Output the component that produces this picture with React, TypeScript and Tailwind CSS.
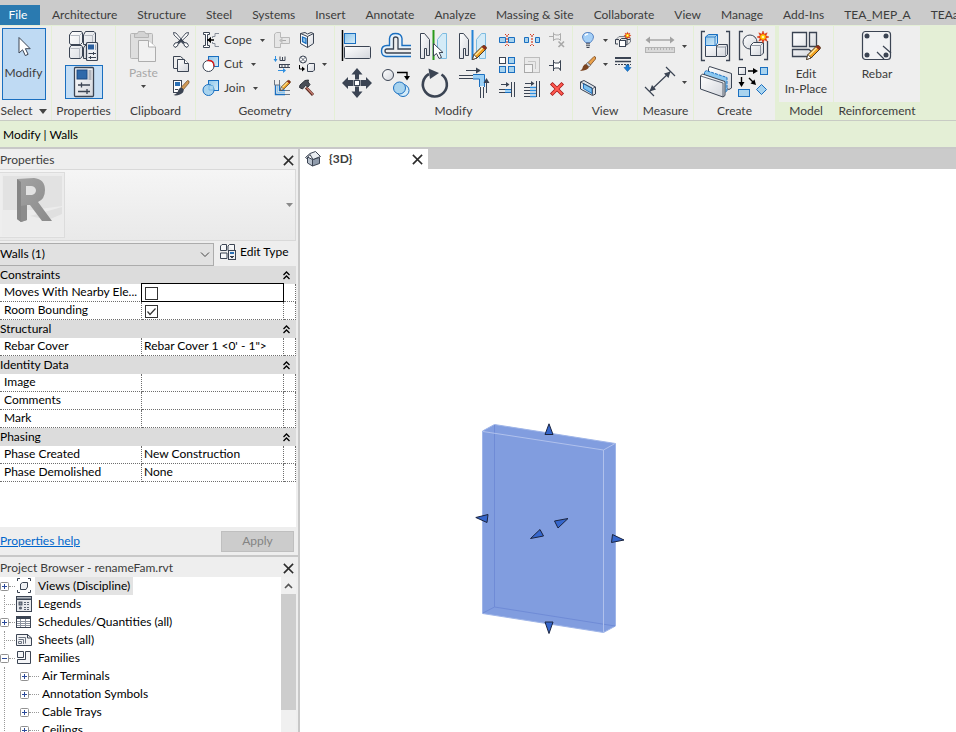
import React, { useState } from 'react';

interface IconProps {
  w?: number;
  h?: number;
  children: React.ReactNode;
}

const INK = '#3b4453';
const BLUE = '#1a6fc0';
const SKY = '#a8d3ee';

const Icon: React.FC<IconProps> = ({ w = 18, h = 18, children }) => (
  <svg width={w} height={h} viewBox={`0 0 ${w} ${h}`} fill="none" className="shrink-0" aria-hidden="true">
    {children}
  </svg>
);

const Gradients = () => (
  <svg width="0" height="0" className="absolute" aria-hidden="true">
    <defs>
      <linearGradient id="face" x1="0" y1="0" x2="1" y2="1">
        <stop offset="0" stopColor="#ffffff" />
        <stop offset="1" stopColor="#d3d6dc" />
      </linearGradient>
      <linearGradient id="sky" x1="0" y1="0" x2="1" y2="1">
        <stop offset="0" stopColor="#8fc6ea" />
        <stop offset="1" stopColor="#d6ecf8" />
      </linearGradient>
      <linearGradient id="letter" x1="0" y1="0" x2="1" y2="1">
        <stop offset="0" stopColor="#a3a3a3" />
        <stop offset="1" stopColor="#8a8a8a" />
      </linearGradient>
    </defs>
  </svg>
);

/* Shared bits */
const Caret = () => (
  <svg width="5" height="3" viewBox="0 0 5 3" className="shrink-0" aria-hidden="true">
    <path d="M0 0H5L2.5 3Z" fill="#444" />
  </svg>
);

const Pencil = ({ x = 0, y = 0 }: { x?: number; y?: number }) => (
  <g transform={`translate(${x} ${y})`}>
    <path d="M0.5 14.5L2 9.5L10.5 1Q12 0 13.5 1.2Q15 2.6 14 4L5 13Z" fill="#f0a020" stroke="#4a3a28" strokeWidth="1" />
    <path d="M3 10.5L11 2.5" stroke="#ffe9a0" strokeWidth="1.4" />
    <path d="M10.5 1Q12 0 13.5 1.2Q15 2.6 14 4L13 5L9.6 2Z" fill="#8b2f1c" />
    <path d="M0.5 14.5L2 9.5L5 13Z" fill="#fff" stroke="#4a3a28" strokeWidth=".8" />
  </g>
);

const Spark = ({ x, y, r = 5 }: { x: number; y: number; r?: number }) => (
  <g transform={`translate(${x} ${y}) scale(${r / 5})`}>
    <path d="M0-6L1.3-2.8L4.2-4.2L2.8-1.3L6 0L2.8 1.3L4.2 4.2L1.3 2.8L0 6L-1.3 2.8L-4.2 4.2L-2.8 1.3L-6 0L-2.8-1.3L-4.2-4.2L-1.3-2.8Z" fill="#e63312" stroke="#d4380f" strokeWidth=".5" />
    <circle r="2.8" fill="#ffc400" />
    <circle r="1.3" fill="#fff8b0" />
  </g>
);

/* Select / properties */
const CursorIcon = () => (
  <Icon w={16} h={24}>
    <path d="M3 2.5V18L6.6 14.8L9.3 20.6L12.1 19.3L9.4 13.7H14.2Z" fill="#fff" stroke={INK} />
  </Icon>
);

const TypePropsIcon = () => (
  <Icon w={32} h={32}>
    <path d="M1.5 5L4 1.500H13.500L14.500 3V12.500L12.500 14.500H2.500L1.500 13ZM15.500 5L17.500 1.500H26L27.500 3V13L26 14.500H15.500ZM1.500 18L3 15.500H13.500L14.500 17V26L12.500 28.500H2.500L1.500 27ZM15.500 28.500V18L17 15.500H19V28.500Z" fill="url(#face)" stroke={INK} />
    <path d="M2.500 5.500H11.500V14M11.500 5.500L14 3M16.500 5.500H24.500V12M24.500 5.500L27 3M2.500 18.500H11.500V28M11.500 18.500L14 16.500" stroke="#b4b9c1" />
    <rect x="18.500" y="12.500" width="11" height="18" rx="1" fill="#eef0f4" stroke={INK} strokeWidth="1.200" />
    <rect x="20" y="14.500" width="6" height="5" fill="#2a5f9e" />
    <path d="M27.500 14.500V20" stroke="#a5abb5" />
    <path d="M20.500 23.500H28M20.500 27.500H28M25.500 22V25M22.500 26V29" stroke={INK} />
  </Icon>
);

const PaletteIcon = () => (
  <Icon w={24} h={32}>
    <rect x="2.500" y="1.500" width="19" height="29" rx="1" fill="url(#face)" stroke={INK} strokeWidth="1.300" />
    <rect x="5" y="4" width="10" height="9" fill="#2f69aa" stroke="#1c4a82" />
    <path d="M18 4V14" stroke="#b0b5be" strokeWidth="3" />
    <path d="M6 19H18M6 25.500H18M9.500 16.500V21.500M15 23V28" stroke={INK} strokeWidth="1.300" />
  </Icon>
);

/* Clipboard */
const PasteIcon = () => (
  <Icon w={28} h={33}>
    <rect x="1.500" y="3.500" width="22" height="25" rx="1" fill="#dedede" stroke="#b5b5b5" />
    <path d="M5.500 7.500V4L8.500 3.500L9.500 1.500H15.500L16.500 3.500L19.500 4V7.500Z" fill="#d3d3d3" stroke="#b5b5b5" />
    <path d="M9.500 10.500H19.500L26.500 17V31.500H9.500Z" fill="#f1f1f1" stroke="#adadad" />
    <path d="M19.500 10.500V17H26.500" fill="#fff" stroke="#adadad" />
  </Icon>
);

const ScissorsIcon = () => (
  <Icon>
    <path d="M1.500 1.500L4 2L12.500 12L11 12.500L2 4ZM16.500 1.500L14 2L5.500 12L7 12.500L16 4Z" fill="#fff" stroke={INK} strokeWidth=".9" />
    <path d="M6 12L9 9L12 12" stroke={INK} strokeWidth="2.200" />
    <path d="M6 11.500L3 12L1.500 14.500L3 16.500L5.500 15L6.500 12ZM12 11.500L15 12L16.500 14.500L15 16.500L12.500 15L11.500 12Z" fill="#fff" stroke={INK} />
  </Icon>
);

const CopyIcon = () => (
  <Icon>
    <path d="M1.500 13V1.500H8.500L11.500 4M1.500 13.500H5" stroke={INK} />
    <path d="M5.500 4.500H12.500L16.500 8.500V16.500H5.500Z" fill="url(#face)" stroke={INK} />
    <path d="M12.500 4.500V8.500H16.500" fill="#fff" stroke={INK} />
  </Icon>
);

const MatchIcon = () => (
  <Icon>
    <rect x="1.500" y="1.500" width="8" height="12" fill="#fff" stroke={INK} />
    <rect x="3" y="3" width="5" height="4" fill="#2a6fb5" />
    <path d="M3 10.500H6" stroke={INK} />
    <path d="M17 2L15.500 1.500L9 8.500L11.500 10.500L17 4Z" fill="#d29a55" stroke="#6b4a2a" strokeWidth=".7" />
    <path d="M9.500 8.500L11.700 10.600Q12 14 8 15.500Q4 17 1.500 16Q5.500 14.500 6 12Q7 8.500 9.500 8.500Z" fill={INK} />
  </Icon>
);

/* Geometry */
const CopeIcon = () => (
  <Icon>
    <path d="M1.500 1.500H7.500V3.500H5.500V14.500H7.500V16.500H1.500V14.500H3.500V3.500H1.500Z" fill="#fff" stroke={INK} />
    <path d="M5 9H12" stroke="#000" strokeWidth="1.500" />
    <path d="M5.500 9L9 5.800V12.200Z" fill="#000" />
    <path d="M17 2.500H13V5.500H10.500M10.500 12.500H13V15.500H17" stroke="#868d99" />
    <path d="M10.500 5.500V7M10.500 11V12.500" stroke="#868d99" />
  </Icon>
);

const CutIcon = () => (
  <Icon>
    <rect x="6.500" y="1.500" width="10" height="10" fill="url(#sky)" stroke={BLUE} />
    <circle cx="6.500" cy="11" r="5.500" fill="#fff" stroke={INK} />
    <path d="M5.500 5.500Q12.500 5 12 11.500" stroke="#e01818" strokeWidth="1.400" />
  </Icon>
);

const JoinIcon = () => (
  <Icon>
    <rect x="6.500" y="1.500" width="10" height="10" fill="url(#sky)" stroke={BLUE} />
    <circle cx="6.500" cy="11" r="5.500" fill={SKY} stroke={BLUE} />
    <path d="M7 6.500H11Q11.500 7.500 11.500 11H7Z" fill={SKY} stroke="#64aede" strokeWidth=".7" />
  </Icon>
);

const CopeRemoveIcon = () => (
  <Icon>
    <path d="M1.500 3L3.500 1.500H7.500V6.500H16.500V12.500H7.500V16.500H1.500Z" fill="#e6e6e6" stroke="#b9b9b9" />
    <path d="M13 9.500H8" stroke="#a8a8a8" />
    <path d="M6 9.500L9.500 6.500V12.500Z" fill="#bdbdbd" />
  </Icon>
);

const BeamJoinIcon = () => (
  <Icon>
    <path d="M7 1.500V5.500H12V1.500M9.500 2V5" stroke={INK} />
    <path d="M6.500 9V13M7 9.500H17M7 12.500H17" stroke={INK} />
    <path d="M8 11H17" stroke={INK} strokeDasharray="2 1" />
    <path d="M2.500 1V6M5 15.500H11" stroke="#2e8fe0" />
    <path d="M.5 4L2.500 7L4.500 4ZM10 13L13 15.500L10 18Z" fill="#2e8fe0" />
  </Icon>
);

const WallJoinIcon = () => (
  <Icon>
    <path d="M2.500 6V15.500H12M6.500 6V11.500H12" stroke={BLUE} strokeWidth="1.400" />
    <path d="M4.500 6V13.500H12" stroke="#8cc8f0" />
    <path d="M1.500 1V6H6.500V1M12 11.500H17M12 15.500H17" stroke="#6d7582" />
    <g transform="translate(7 1) scale(.72)">
      <Pencil />
    </g>
  </Icon>
);

const SplitFaceIcon = () => (
  <Icon>
    <path d="M2.500 2.500L9.500 5.500V16.500L2.500 12.500Z" fill="#fff" stroke={INK} />
    <path d="M9.500 5.500L15.500 2.500V12.500L9.500 16.500Z" fill="url(#face)" stroke={INK} />
    <path d="M2.500 2.500L7 1.500L9.500 3L13 1.500L15.500 2.500" stroke={INK} />
    <path d="M4.500 6L8 7.500V12.500L4.500 10.500Z" fill="#8fc6ea" stroke={BLUE} strokeWidth="1.300" />
  </Icon>
);

const PaintIcon = () => (
  <Icon>
    <circle cx="5" cy="4.500" r="3.500" fill="#fff" stroke={INK} />
    <path d="M2.500 2L7.500 7M7.500 2L2.500 7" stroke={INK} strokeWidth=".8" />
    <path d="M1.500 10V14H4" stroke="#000" />
    <path d="M4 11.500L7 14L4 16.500Z" fill="#000" />
    <path d="M9.500 10L11 8.500H16.500V15L15 16.500H9.500Z" fill="url(#face)" stroke={INK} />
  </Icon>
);

const HammerIcon = () => (
  <Icon>
    <path d="M8 8.500L15 16" stroke="#5b2b20" strokeWidth="3" />
    <path d="M8.500 8.500L15 15.500" stroke="#c97f74" strokeWidth="1.200" />
    <path d="M1.500 8.500L2 6L7 1.500L10.500 1L10 3L12 5.500L10 8L7.500 6.500L4.500 10Z" fill="#4a4f58" stroke="#2f333a" />
  </Icon>
);

/* Modify, large */
const AlignIcon = () => (
  <Icon w={32} h={34}>
    <path d="M1.500 1V32" stroke="#000" strokeWidth="1.500" />
    <rect x="3.500" y="4.500" width="11" height="10" fill="url(#sky)" stroke={BLUE} />
    <rect x="3.500" y="17.500" width="26" height="12" rx="1" fill="url(#face)" stroke={INK} />
  </Icon>
);

const OffsetIcon = () => (
  <Icon w={32} h={34}>
    <path d="M31 27.500H6Q1.500 27 1.500 22Q1.500 16.500 7 16.500H9.500V9.500Q10 4.500 15.500 4.500Q21.500 4.500 22 9.500V16.500H31" fill="#e6f1fa" stroke={BLUE} strokeWidth="1.400" />
    <path d="M31 24H7Q5 24 5 22Q5 20 7 20H13.500V10Q13.500 8 15.500 8Q18 8 18 10V20H31" fill="#eee" stroke={INK} strokeWidth="1.300" />
  </Icon>
);

const MirrorShapes = () => (
  <>
    <path d="M1.500 4.500H5.500L10.500 10.500V26.500H7.500V19.500H5.500V29.500H1.500Z" fill="url(#face)" stroke={INK} />
    <path d="M27.500 4.500H23.500L18.500 10.500V26.500H21.500V29.500H27.500Z" fill="#d4ebf7" stroke="#7dbbe0" />
  </>
);

const MirrorPickIcon = () => (
  <Icon w={32} h={34}>
    <MirrorShapes />
    <path d="M14.500 1V31" stroke="#2a9a1a" strokeWidth="2" />
    <path d="M14.500 14.500V27L17.500 24.500L20 29.500L22.500 28.500L20.200 23.500H24Z" fill="#fff" stroke={INK} />
  </Icon>
);

const MirrorDrawIcon = () => (
  <Icon w={32} h={34}>
    <MirrorShapes />
    <path d="M14.500 1V31" stroke="#2583d6" strokeWidth="2" />
    <Pencil x={14} y={16} />
  </Icon>
);

const MoveIcon = () => (
  <Icon w={32} h={34}>
    <path d="M16 2L21.500 8.500H18V14H25V11L31 17L25 23V20H18V25.500H21.500L16 32L10.500 25.500H14V20H7V23L1 17L7 11V14H14V8.500H10.500Z" fill={INK} />
    <rect x="12.500" y="13.500" width="7" height="7" fill="#eee" />
    <rect x="13.500" y="14.500" width="5" height="5" fill="#fff" stroke={INK} />
  </Icon>
);

const CopyShapeIcon = () => (
  <Icon w={32} h={34}>
    <circle cx="8" cy="9" r="5.500" fill="url(#face)" stroke={INK} />
    <path d="M17 6.500H27V11" stroke="#000" strokeWidth="1.400" />
    <path d="M24 10H30L27 14.500Z" fill="#000" />
    <circle cx="23" cy="24.500" r="6" fill="#d6ecf8" stroke={BLUE} />
    <circle cx="19.500" cy="22" r="6" fill={SKY} stroke={BLUE} />
  </Icon>
);

const RotateIcon = () => (
  <Icon w={32} h={34}>
    <path d="M22.500 8.500A12 12 0 1 1 10 8" stroke={INK} strokeWidth="2.600" />
    <path d="M9.500 2.500L20 7L11 13Z" fill={INK} />
  </Icon>
);

const TrimIcon = () => (
  <Icon w={32} h={34}>
    <path d="M1 9.500H15M1 12.500H15" stroke={INK} />
    <path d="M15 11H24V20" stroke="#9bd0f5" strokeWidth="4" />
    <path d="M15 8.500H26.500V21M15 13H21.500V21" stroke={BLUE} />
    <path d="M22.500 21V32M25.500 21V32" stroke={INK} />
    <path d="M8 4.500H20M28.500 27V15" stroke={INK} />
    <path d="M18 1.500L23 4.500L18 7.500ZM25.500 17L28.500 12L31.500 17Z" fill={INK} />
  </Icon>
);

/* Modify, small */
const SplitIcon = () => (
  <Icon>
    <path d="M1.500 6.500H7.500V11.500H1.500ZM10.500 6.500H16.500V11.500H10.500Z" fill={SKY} stroke={BLUE} />
    <path d="M9 4V14" stroke="#d03a20" strokeWidth="1.200" strokeDasharray="2 1" />
    <path d="M7 3.500H8M10 3.500H11M7 14.500H8M10 14.500H11" stroke="#d03a20" />
  </Icon>
);

const SplitGapIcon = () => (
  <Icon>
    <path d="M1.500 6.500H5.500V11.500H1.500ZM12.500 6.500H16.500V11.500H12.500Z" fill={SKY} stroke={BLUE} />
    <path d="M9 4V14" stroke="#d03a20" strokeWidth="1.200" strokeDasharray="2 1" />
    <path d="M7 3.500H8M10 3.500H11M7 14.500H8M10 14.500H11" stroke="#d03a20" />
  </Icon>
);

const UnpinIcon = () => (
  <Icon>
    <path d="M1 5.500H5M5.500 1.500V10M5.500 3L8 4H11L12.500 2.500V9.500L11 8H8L5.500 9" stroke="#adadad" />
    <path d="M10.500 10.500L16 16M16 10.500L10.500 16" stroke="#a8a8a8" strokeWidth="1.600" />
  </Icon>
);

const ArrayIcon = () => (
  <Icon>
    <rect x="1.500" y="1.500" width="6" height="6" fill="#fff" stroke={INK} />
    <rect x="10.500" y="1.500" width="6" height="6" fill={SKY} stroke={BLUE} />
    <rect x="1.500" y="10.500" width="6" height="6" fill={SKY} stroke={BLUE} />
    <rect x="10.500" y="10.500" width="6" height="6" fill={SKY} stroke={BLUE} />
  </Icon>
);

const ScaleIcon = () => (
  <Icon>
    <rect x="1.500" y="1.500" width="15" height="15" fill="#e9e9e9" stroke="#bdbdbd" />
    <rect x="1.500" y="8.500" width="8" height="8" fill="#f3f3f3" stroke="#a8a8a8" />
    <path d="M5 5.500H12.500V13" stroke="#c6c6c6" />
  </Icon>
);

const PinIcon = () => (
  <Icon>
    <path d="M1 9.500H5" stroke={INK} />
    <path d="M5.500 4V15M5.500 6L7 7H11L12.500 4.500V14.500L11 12H7L5.500 13" fill="#fff" stroke={INK} />
  </Icon>
);

const TrimOneIcon = () => (
  <Icon>
    <path d="M1 9.500H7M1 12.500H7M13.500 2V17M16.500 2V17" stroke={INK} />
    <path d="M7 11H13" stroke="#9bd0f5" strokeWidth="3" />
    <path d="M7 9.500H13M7 12.500H13" stroke={BLUE} />
    <path d="M3 4.500H9" stroke={INK} />
    <path d="M8 2L11.500 4.500L8 7Z" fill={INK} />
  </Icon>
);

const TrimManyIcon = () => (
  <Icon>
    <path d="M1 7.500H7M1 10.500H7M1 13.500H7M1 16.500H7M13.500 1V17M16.500 1V17" stroke={INK} />
    <path d="M7 7.500H13M7 10.500H13M7 13.500H13M7 16.500H13" stroke="#2e8fe0" strokeWidth="1.400" />
    <path d="M2 3.500H9" stroke={INK} />
    <path d="M8 1L11.500 3.500L8 6Z" fill={INK} />
  </Icon>
);

const DeleteIcon = () => (
  <Icon>
    <path d="M4.500 4.500L13.500 13.500M13.500 4.500L4.500 13.500" stroke="#a81818" strokeWidth="3.600" strokeLinecap="square" />
    <path d="M4.500 4.500L13.500 13.500M13.500 4.500L4.500 13.500" stroke="#ff5a50" strokeWidth="2" strokeLinecap="square" />
  </Icon>
);

/* View */
const BulbIcon = () => (
  <Icon>
    <path d="M6.500 11.500Q3.500 8.500 3.500 6Q4 1.500 9 1.500Q14 1.500 14.500 6Q14.500 8.500 11.500 11.500Z" fill="#a5d0f7" stroke="#5a86c4" />
    <path d="M6 4.500Q7 3 9 3" stroke="#fff" strokeWidth="1.500" />
    <path d="M7 12.500H11M7 14.500H11" stroke="#6f7580" strokeWidth="1.400" />
    <path d="M7.500 16.500H10.500" stroke={INK} />
  </Icon>
);

const BrushIcon = () => (
  <Icon>
    <path d="M16.500 2L15 1.500L9 7.500L11.500 10L16.500 4Z" fill="#e9a14c" stroke="#7a4a22" strokeWidth=".8" />
    <path d="M8.500 7.500L11.700 10.300L10 12L7 9Z" fill="#c9cdd3" stroke="#555" strokeWidth=".6" />
    <path d="M7 9L10 12Q9 15.500 1 16Q4 13.500 4 11.500Q5 9 7 9Z" fill="#7b4420" />
  </Icon>
);

const SelectionBoxIcon = () => (
  <Icon>
    <path d="M1.500 3L5 1.500L16.500 8V15L13.500 16.500L1.500 10Z" fill="#dfe3e8" stroke={INK} />
    <path d="M4.500 4.500L13 9V14.500L4.500 9.500Z" fill="#7cc0ee" stroke={BLUE} />
    <path d="M1.500 3L13.500 9.500V16M13.500 9.500L16.500 8" stroke={INK} strokeWidth=".8" />
  </Icon>
);

const HideBoxIcon = () => (
  <Icon>
    <path d="M1.500 9L5 5.500H11L16.500 7V11L13 14" fill="#e2e2e2" stroke="#7b808a" />
    <path d="M1.500 8.500V13H4M1.500 8.500H5M13 8.500H16" stroke={INK} />
    <rect x="5.500" y="9.500" width="6" height="6" fill="#fff" stroke={INK} />
    <path d="M5.500 9.500L7.500 7.500H13V13L11.500 15" stroke={INK} />
    <Spark x={13.500} y={4.500} r={3} />
  </Icon>
);

const LineworkIcon = () => (
  <Icon>
    <path d="M1 3H17" stroke={INK} strokeWidth="2" />
    <path d="M1 6.500H17" stroke={INK} strokeWidth="1.500" />
    <path d="M1 9.500H17" stroke={INK} strokeDasharray="2 1" />
    <path d="M12 10H15V12.500H17L13.500 16.500L10 12.500H12Z" fill="#1c7fd8" stroke="#0f5aa5" strokeWidth=".6" />
  </Icon>
);

/* Measure */
const RulerIcon = () => (
  <Icon w={32} h={34}>
    <path d="M5 11H27" stroke="#a2a2a2" strokeWidth="1.400" />
    <path d="M1.500 11L6 7.500V14.500ZM30.500 11L26 7.500V14.500Z" fill="#a2a2a2" />
    <rect x="1.500" y="18.500" width="29" height="5" fill="#d9d9d9" stroke="#b3b3b3" />
    <path d="M4.500 19V21M7.500 19V21M10.500 19V21M13.500 19V21M16.500 19V21M19.500 19V21M22.500 19V21M25.500 19V21M28 19V21" stroke="#b3b3b3" />
  </Icon>
);

const DimensionIcon = () => (
  <Icon w={32} h={34}>
    <path d="M1 22L10 31M22 2L31 11M6 26L26 7" stroke={INK} strokeWidth="1.200" />
    <path d="M5.500 26.500L8 20L12 24.500ZM26.500 6.500L20 8.500L24.500 13Z" fill={INK} />
  </Icon>
);

/* Create */
const GroupIcon = () => (
  <Icon w={34} h={34}>
    <path d="M6 2.500H2.500V31.500H6M27 2.500H30.500V31.500H27" stroke={INK} strokeWidth="1.300" />
    <path d="M6.500 16.500H17.500V27.500H6.500ZM17.500 18L19.500 15.500H28.500V25.500L26.500 27.500H17.500Z" fill="url(#face)" stroke={INK} />
    <path d="M17.500 18H26.500V27M26.500 18L28.500 15.500" stroke="#8e95a0" />
    <path d="M6.500 8L9.500 5.500H18.500V14L16.500 16.500H6.500Z" fill="url(#sky)" stroke={BLUE} />
    <path d="M6.500 8H16V16M16 8L18.500 5.500" stroke={BLUE} strokeWidth=".8" />
  </Icon>
);

const AssemblyIcon = () => (
  <Icon w={34} h={34}>
    <path d="M6 2.500H2.500V30.500H6M27 30.500H30.500V12" stroke={INK} strokeWidth="1.300" />
    <circle cx="13" cy="13" r="7" fill="url(#face)" stroke={INK} />
    <path d="M13.500 16.500L16.500 13.500H26.500V24L24 26.500H13.500Z" fill="url(#face)" stroke={INK} />
    <path d="M13.500 16.500H23.500V26M23.500 16.500L26.500 13.500" stroke="#8e95a0" />
    <Spark x={26} y={8} r={5} />
  </Icon>
);

const PartsIcon = () => (
  <Icon w={34} h={34}>
    <path d="M9.500 3.500L10.500 1.500L32.500 8.500V23L30 24.500L9.500 16.500Z" fill="url(#face)" stroke={INK} />
    <path d="M5.500 7.500L7 5.500L28 12.500V26L26 27.500L5.500 20.500Z" fill="#8cc8f0" stroke={BLUE} strokeDasharray="3 1" />
    <path d="M1.500 11L3.500 9L26 16.500V30.500L24 32L1.500 24Z" fill="url(#face)" stroke={INK} />
    <path d="M1.500 11L24 18V32" stroke={INK} strokeWidth=".8" />
  </Icon>
);

const SimilarIcon = () => (
  <Icon w={34} h={34}>
    <rect x="1.500" y="2.500" width="7" height="7" fill="url(#face)" stroke={INK} />
    <rect x="23.500" y="2.500" width="7" height="7" fill={SKY} stroke={BLUE} />
    <rect x="1.500" y="24.500" width="11" height="7" fill={SKY} stroke={BLUE} />
    <path d="M24.500 19.500L29.500 24.500L24.500 29.500L19.500 24.500Z" fill={SKY} stroke={BLUE} />
    <path d="M11 6H17M4.500 12V18M12 13L16 17" stroke="#000" strokeWidth="1.400" />
    <path d="M16 3L21 6L16 9ZM1.500 17H7.500L4.500 22ZM19 20L13.500 18.500L17.500 14.500Z" fill="#000" />
  </Icon>
);

const EditInPlaceIcon = () => (
  <Icon w={32} h={32}>
    <path d="M2.500 2.500H16.500V16.500H2.500ZM19.500 2.500H26.500V16.500H19.500ZM2.500 19.500H19L22 22V26.500H2.500Z" fill="url(#face)" stroke={INK} strokeWidth="1.300" />
    <Pencil x={16} y={15} />
  </Icon>
);

const RebarIcon = () => (
  <Icon w={32} h={32}>
    <rect x="1.500" y="1.500" width="28" height="28" rx="3" fill="#f1f2f4" stroke={INK} strokeWidth="1.200" />
    <g fill={INK}>
      <circle cx="6" cy="6" r="2.500" />
      <circle cx="25" cy="6" r="2.500" />
      <circle cx="6" cy="25" r="2.500" />
      <circle cx="25" cy="25" r="2.500" />
    </g>
    <path d="M22 16L30 23M16 22L23 29" stroke={INK} strokeWidth="1.200" />
  </Icon>
);

/* Palette and tree */
const EditTypeIcon = () => (
  <Icon>
    <path d="M1.500 3L3 1.500H7.500V7.500H1.500ZM9 3L10.500 1.500H15.500V7M1.500 10H8V15.500H1.500ZM9 3V7.500H11" fill="#f6f7f9" stroke={INK} />
    <rect x="9.500" y="7.500" width="7" height="9" fill="#eef0f4" stroke={INK} />
    <rect x="11" y="9" width="4" height="2" fill="#2a6fb5" />
    <path d="M11 13.500H15M12 14.500H14" stroke={INK} />
  </Icon>
);

const CloseIcon = () => (
  <svg width="11" height="11" viewBox="0 0 11 11" aria-hidden="true">
    <path d="M1.500 1.500L9.500 9.500M9.500 1.500L1.500 9.500" stroke="#2b2b2b" strokeWidth="1.700" strokeLinecap="square" />
  </svg>
);

const HouseIcon = () => (
  <Icon>
    <path d="M3.500 7V13L8.500 16V9.500Z" fill="#b9c2cd" stroke={INK} />
    <path d="M8.500 9.500L15.500 7.500V13.500L8.500 16Z" fill="#8f9bab" stroke={INK} />
    <path d="M1.500 7.500L6 3.500L11.500 1.500L16.500 6.500L9 9.500L6 4.500L2.500 8.500Z" fill="#e9edf1" stroke={INK} />
  </Icon>
);

const LetterR = () => (
  <svg width="62" height="62" viewBox="0 0 62 62" className="block" aria-hidden="true">
    <rect width="62" height="62" fill="#ececec" />
    <path d="M1 2H60V32L30 36H1Z" fill="#e2e2e2" />
    <path d="M28 42L60 33V40L46 46Z" fill="#e0e0e0" />
    <path fillRule="evenodd" d="M15 5L32 4Q43 5 43 16Q43 25 36 28L50 47H40L28 31H25V46L19 48L15 45ZM24 12V21H30Q34 20 34 16Q33 12 29 12Z" fill="url(#letter)" />
    <path d="M15 5L19 8V48L15 45Z" fill="#858585" />
    <path d="M25 46L19 48V32L25 31Z" fill="#8c8c8c" />
  </svg>
);

const ViewsIcon = () => (
  <Icon>
    <path d="M5 1.500H2.500V4M13 1.500H15.500V4M5 15.500H2.500V13M13 15.500H15.500V13" stroke={INK} />
    <path d="M5.500 7L7.500 5.500H12.500V10L11 12.500H5.500Z" fill="#eef0f3" stroke={INK} />
  </Icon>
);

const LegendsIcon = () => (
  <Icon>
    <rect x="1.500" y="1.500" width="15" height="15" fill="#e9ebee" stroke={INK} />
    <path d="M2 3.500H16" stroke="#7d8591" strokeWidth="2" />
    <path d="M2 4.500H16" stroke={INK} />
    <rect x="4" y="7" width="3" height="3" fill="#8d94a0" stroke={INK} strokeWidth=".8" />
    <circle cx="5.500" cy="13" r="1.600" fill="#5d6573" />
    <path d="M9 7.500H15M9 9.500H14M9 12.500H15M9 14.500H14" stroke="#5d6573" strokeDasharray="2 1" />
  </Icon>
);

const ScheduleIcon = () => (
  <Icon>
    <rect x="1.500" y="3.500" width="14" height="11" fill="#fff" stroke={INK} />
    <path d="M1 5H16" stroke={INK} strokeWidth="2" />
    <path d="M2 8.500H15M2 10.500H15M2 12.500H15M5.500 6V14M10.500 6V14" stroke="#8d94a0" />
  </Icon>
);

const SheetIcon = () => (
  <Icon>
    <path d="M1.500 3.500H12.500L16.500 7V14.500H1.500Z" fill="#f2f3f5" stroke={INK} />
    <path d="M12.500 3V7H16.500" stroke={INK} />
    <path d="M3.500 6.500H10.500V12.500M3.500 12.500V10.500H6.500V12.500H3.500M8.500 13V8.500H3.500" stroke="#6d7582" />
  </Icon>
);

const FamilyIcon = () => (
  <Icon>
    <path d="M2.500 2.500H8.500V8.500H2.500ZM10.500 2.500H15.500V14.500H2.500V10.500H10.500Z" fill="#f5f6f8" stroke={INK} />
  </Icon>
);

/* Ribbon pieces */
const IconButton: React.FC<{ label: string; children: React.ReactNode; caret?: boolean; className?: string }> = ({
  label,
  children,
  caret,
  className = 'h-6'
}) => (
  <button aria-label={label} className={`flex items-center gap-1.5 ${className}`}>
    {children}
    {caret && <Caret />}
  </button>
);

const TextButton: React.FC<{ label: string; children: React.ReactNode }> = ({ label, children }) => (
  <button className="flex h-6 items-center gap-1">
    {children}
    <span className="mr-1">{label}</span>
    <Caret />
  </button>
);

interface PanelProps {
  title: React.ReactNode;
  width: string;
  contextual?: boolean;
  children: React.ReactNode;
}

const Panel: React.FC<PanelProps> = ({ title, width, contextual, children }) => (
  <section className={`flex shrink-0 flex-col border-r border-[#e4efd6] ${width} ${contextual ? 'bg-[#e4efd6]' : 'bg-[#eeeeee]'}`}>
    <div className="flex h-[76px] justify-center bg-[#eeeeee] pt-0.5">{children}</div>
    <div className="flex h-[18px] items-center justify-center gap-1.5 whitespace-nowrap">{title}</div>
  </section>
);

const tabs = [
  'Architecture', 'Structure', 'Steel', 'Systems', 'Insert', 'Annotate', 'Analyze',
  'Massing & Site', 'Collaborate', 'View', 'Manage', 'Add-Ins', 'TEA_MEP_A', 'TEAaaa'
];

const Ribbon = () => (
  <header className="text-[#3c3c3c]">
    <nav className="flex h-[25px] items-end overflow-hidden bg-[#cbcbcb]">
      <button className="h-5 w-10 shrink-0 bg-[#2a7ab0] pr-1 text-white">File</button>
      <div className="flex pl-0.5">
        {tabs.map((tab) => (
          <button key={tab} className="h-5 shrink-0 whitespace-nowrap px-2.5">{tab}</button>
        ))}
      </div>
    </nav>

    <div className="flex h-[96px] overflow-hidden border-b border-[#c8cbc4] bg-[#e4efd6] pt-px">
      <Panel title={<>Select <svg width="8" height="5" viewBox="0 0 8 5" className="mr-1" aria-hidden="true"><path d="M0 0H8L4 5Z" fill="#444" /></svg></>} width="w-[52px]">
        <button className="mr-1 flex h-[72px] w-11 flex-col items-center border border-[#1a6fc0] bg-[#bfdaf3] pt-1.5">
          <CursorIcon />
          <span className="mt-1.5">Modify</span>
        </button>
      </Panel>

      <Panel title="Properties" width="w-16">
        <div className="flex flex-col items-center">
          <IconButton label="Type Properties" className="h-9"><TypePropsIcon /></IconButton>
          <button aria-label="Properties" className="mt-px flex h-[34px] w-[38px] items-center justify-center border border-[#1a6fc0] bg-[#c5def5]">
            <PaletteIcon />
          </button>
        </div>
      </Panel>

      <Panel title="Clipboard" width="w-20">
        <div className="flex gap-3.5 pl-2">
          <button className="flex flex-col items-center pt-0.5 text-[#a8a8a8]">
            <PasteIcon />
            <span className="mb-1 mt-0.5">Paste</span>
            <Caret />
          </button>
          <div className="flex flex-col">
            <IconButton label="Cut to Clipboard"><ScissorsIcon /></IconButton>
            <IconButton label="Copy to Clipboard"><CopyIcon /></IconButton>
            <IconButton label="Match Type"><MatchIcon /></IconButton>
          </div>
        </div>
      </Panel>

      <Panel title="Geometry" width="w-[139px]">
        <div className="flex w-full pl-1.5">
          <div className="flex w-[71px] flex-col">
            <TextButton label="Cope"><CopeIcon /></TextButton>
            <TextButton label="Cut"><CutIcon /></TextButton>
            <TextButton label="Join"><JoinIcon /></TextButton>
          </div>
          <div className="flex w-[25px] flex-col">
            <IconButton label="Cut Profile"><CopeRemoveIcon /></IconButton>
            <IconButton label="Beam/Column Joins"><BeamJoinIcon /></IconButton>
            <IconButton label="Wall Joins"><WallJoinIcon /></IconButton>
          </div>
          <div className="flex flex-col">
            <IconButton label="Split Face"><SplitFaceIcon /></IconButton>
            <IconButton label="Paint" caret><PaintIcon /></IconButton>
            <IconButton label="Demolish"><HammerIcon /></IconButton>
          </div>
        </div>
      </Panel>

      <Panel title="Modify" width="w-[238px]">
        <div className="grid grid-cols-4 gap-x-[7px]">
          <IconButton label="Align" className="h-9"><AlignIcon /></IconButton>
          <IconButton label="Offset" className="h-9"><OffsetIcon /></IconButton>
          <IconButton label="Mirror - Pick Axis" className="h-9"><MirrorPickIcon /></IconButton>
          <IconButton label="Mirror - Draw Axis" className="h-9"><MirrorDrawIcon /></IconButton>
          <IconButton label="Move" className="h-9"><MoveIcon /></IconButton>
          <IconButton label="Copy" className="h-9"><CopyShapeIcon /></IconButton>
          <IconButton label="Rotate" className="h-9"><RotateIcon /></IconButton>
          <IconButton label="Trim to Corner" className="h-9"><TrimIcon /></IconButton>
        </div>
        <div className="ml-2 grid grid-cols-3 gap-x-[7px]">
          <IconButton label="Split Element"><SplitIcon /></IconButton>
          <IconButton label="Split with Gap"><SplitGapIcon /></IconButton>
          <IconButton label="Unpin"><UnpinIcon /></IconButton>
          <IconButton label="Array"><ArrayIcon /></IconButton>
          <IconButton label="Scale"><ScaleIcon /></IconButton>
          <IconButton label="Pin"><PinIcon /></IconButton>
          <IconButton label="Trim Single"><TrimOneIcon /></IconButton>
          <IconButton label="Trim Multiple"><TrimManyIcon /></IconButton>
          <IconButton label="Delete"><DeleteIcon /></IconButton>
        </div>
      </Panel>

      <Panel title="View" width="w-[65px]">
        <div className="flex gap-1.5">
          <div className="flex flex-col">
            <IconButton label="Hide in View" caret><BulbIcon /></IconButton>
            <IconButton label="Override Graphics" caret><BrushIcon /></IconButton>
            <IconButton label="Selection Box"><SelectionBoxIcon /></IconButton>
          </div>
          <div className="flex flex-col">
            <IconButton label="Displace Elements"><HideBoxIcon /></IconButton>
            <IconButton label="Linework"><LineworkIcon /></IconButton>
          </div>
        </div>
      </Panel>

      <Panel title="Measure" width="w-14">
        <div className="flex flex-col">
          <IconButton label="Measure" caret className="h-9"><RulerIcon /></IconButton>
          <IconButton label="Aligned Dimension" caret className="h-9"><DimensionIcon /></IconButton>
        </div>
      </Panel>

      <Panel title="Create" width="w-[82px]">
        <div className="grid grid-cols-2 content-start gap-x-1">
          <IconButton label="Create Group" className="h-9"><GroupIcon /></IconButton>
          <IconButton label="Create Assembly" className="h-9"><AssemblyIcon /></IconButton>
          <IconButton label="Create Parts" className="h-9"><PartsIcon /></IconButton>
          <IconButton label="Create Similar" className="h-9"><SimilarIcon /></IconButton>
        </div>
      </Panel>

      <div className="ml-[3px] flex">
        <Panel title="Model" width="w-[55px]" contextual>
          <button className="flex flex-col items-center pt-0.5 leading-[15px]">
            <EditInPlaceIcon />
            <span className="mt-1">Edit<br />In-Place</span>
          </button>
        </Panel>
        <Panel title="Reinforcement" width="w-[87px]" contextual>
          <button className="flex flex-col items-center pt-0.5 leading-[15px]">
            <RebarIcon />
            <span className="mt-1">Rebar</span>
          </button>
        </Panel>
      </div>
    </div>

    <div className="flex h-7 items-center border-b-2 border-[#c8c8c8] bg-[#e4efd6] pl-[3px] pt-0.5 text-black">Modify | Walls</div>
  </header>
);

const PanelHeader: React.FC<{ title: string }> = ({ title }) => (
  <div className="flex h-5 items-center justify-between pr-0.5 pt-0.5 text-[#3c3c3c]">
    <h2>{title}</h2>
    <button aria-label={`Close ${title}`}><CloseIcon /></button>
  </div>
);

interface Property {
  name: string;
  value?: string;
  checked?: boolean;
}

const groups: { title: string; rows: Property[] }[] = [
  { title: 'Constraints', rows: [{ name: 'Moves With Nearby Ele...', checked: false }, { name: 'Room Bounding', checked: true }] },
  { title: 'Structural', rows: [{ name: 'Rebar Cover', value: 'Rebar Cover 1 <0\' - 1">' }] },
  { title: 'Identity Data', rows: [{ name: 'Image', value: '' }, { name: 'Comments', value: '' }, { name: 'Mark', value: '' }] },
  { title: 'Phasing', rows: [{ name: 'Phase Created', value: 'New Construction' }, { name: 'Phase Demolished', value: 'None' }] }
];

const PropertyRow: React.FC<Property> = ({ name, value, checked }) => {
  const [on, setOn] = useState(checked ?? false);
  const id = name.toLowerCase().replace(/[^a-z]+/g, '-');
  const edge = 'border-b border-r border-dotted border-[#6e6e6e] p-0 align-top';

  return (
    <tr className="h-[18px]">
      <th scope="row" className={`${edge} whitespace-nowrap text-left font-normal`}>
        <label htmlFor={id} className="block h-[17px] pl-1 leading-4">{name}</label>
      </th>
      <td className={edge}>
        {checked === undefined ? (
          <input id={id} defaultValue={value} className="block h-4 w-full bg-transparent pl-0.5 leading-4 outline-none" />
        ) : (
          <div className={`flex h-[17px] items-center pl-[3px] pt-px ${checked ? '' : 'outline outline-black'}`}>
            <span className="relative flex h-[13px] w-[13px]">
              <input
                id={id}
                type="checkbox"
                checked={on}
                onChange={() => setOn(!on)}
                className="h-[13px] w-[13px] appearance-none border border-[#333] bg-white"
              />
              {on && (
                <svg width="13" height="13" viewBox="0 0 13 13" className="pointer-events-none absolute inset-0" aria-hidden="true">
                  <path d="M2.500 6.500L5 9.500L10.500 3.500" fill="none" stroke="#333" strokeWidth="1.200" />
                </svg>
              )}
            </span>
          </div>
        )}
      </td>
      <td className={edge} />
    </tr>
  );
};

const PropertiesPalette = () => (
  <section className="pr-0.5">
    <PanelHeader title="Properties" />
    <div className="flex h-[72px] items-center justify-between border border-l-0 border-[#d9d9d9] bg-linear-to-b from-[#f5f5f5] to-[#e9e9e9] pr-0.5">
      <div className="border border-l-0 border-[#dcdcdc] bg-[#eeeeee] py-px pl-0.5"><LetterR /></div>
      <button aria-label="Change type">
        <svg width="7" height="4" viewBox="0 0 7 4" aria-hidden="true"><path d="M0 0H7L3.500 4Z" fill="#8a8a8a" /></svg>
      </button>
    </div>

    <div className="flex h-[25px] items-start gap-[5px] pt-0.5">
      <div className="relative w-[214px]">
        <select aria-label="Selection filter" className="h-[23px] w-full appearance-none border border-l-0 border-[#acacac] bg-[#e1e1e1] pb-0.5 text-black outline-none">
          <option>Walls (1)</option>
        </select>
        <svg width="10" height="6" viewBox="0 0 10 6" className="pointer-events-none absolute right-1 top-[9px]" aria-hidden="true">
          <path d="M1 .5L5 4.500L9 .5" fill="none" stroke="#444" />
        </svg>
      </div>
      <button className="flex items-center gap-[3px]">
        <EditTypeIcon />
        Edit Type
      </button>
    </div>

    <div className="h-[261px] bg-white">
      <table className="w-full table-fixed border-separate border-spacing-0">
        <colgroup>
          <col className="w-[142px]" />
          <col />
          <col className="w-3" />
        </colgroup>
        {groups.map((group) => (
          <tbody key={group.title}>
            <tr className="h-[18px] bg-[#dcdcdc]">
              <th colSpan={3} scope="rowgroup" className="p-0 text-left font-normal">
                <div className="flex h-[18px] items-center justify-between pr-1.5 leading-4">
                  <span>{group.title}</span>
                  <button aria-label={`Collapse ${group.title}`}>
                    <svg width="7" height="9" viewBox="0 0 7 9" aria-hidden="true">
                      <path d="M.5 4L3.500 1L6.500 4M.5 8L3.500 5L6.500 8" fill="none" stroke="#000" strokeWidth="1.300" />
                    </svg>
                  </button>
                </div>
              </th>
            </tr>
            {group.rows.map((row) => <PropertyRow key={row.name} {...row} />)}
          </tbody>
        ))}
      </table>
    </div>

    <div className="flex h-7 items-center justify-between pr-0.5">
      <a href="#help" className="text-[#0066cc] underline">Properties help</a>
      <button disabled className="h-[21px] w-[73px] border border-[#bfbfbf] bg-[#cccccc] text-[#838383]">Apply</button>
    </div>
  </section>
);

const Expander = ({ open }: { open?: boolean }) => (
  <svg width="9" height="9" viewBox="0 0 9 9" className="shrink-0" aria-hidden="true">
    <rect x=".5" y=".5" width="8" height="8" rx="1" fill="#fff" stroke="#919191" />
    <path d={open ? 'M2 4.500H7' : 'M2 4.500H7M4.500 2V7'} stroke="#2b4a9b" />
  </svg>
);

const roots = [
  { label: 'Views (Discipline)', icon: <ViewsIcon />, box: 'closed', selected: true },
  { label: 'Legends', icon: <LegendsIcon />, box: 'none' },
  { label: 'Schedules/Quantities (all)', icon: <ScheduleIcon />, box: 'closed' },
  { label: 'Sheets (all)', icon: <SheetIcon />, box: 'none' },
  { label: 'Families', icon: <FamilyIcon />, box: 'open' }
];

const families = ['Air Terminals', 'Annotation Symbols', 'Cable Trays', 'Ceilings'];

const ProjectBrowser = () => (
  <section className="flex min-h-0 flex-1 flex-col border-t-2 border-[#c8c8c8] pr-0.5">
    <PanelHeader title="Project Browser - renameFam.rvt" />
    <div className="flex min-h-0 flex-1 overflow-hidden bg-white">
      <ul className="flex-1">
        {roots.map((node) => (
          <li key={node.label} className="flex h-[18px] items-center">
            <span className="flex h-full w-[15px] items-center">
              {node.box === 'none' ? (
                <span className="ml-1 h-full w-[11px] border-l border-dotted border-[#999]" />
              ) : (
                <Expander open={node.box === 'open'} />
              )}
              <span className={`border-t border-dotted border-[#999] ${node.box === 'none' ? '-ml-[11px] w-[11px]' : 'w-1.5'}`} />
            </span>
            {node.icon}
            <span className={`ml-0.5 px-[3px] leading-[18px] ${node.selected ? 'bg-[#e3e3e3]' : ''}`}>{node.label}</span>
          </li>
        ))}
        <li>
          <ul className="ml-1 border-l border-dotted border-[#999]">
            {families.map((name) => (
              <li key={name} className="flex h-[18px] items-center pl-[15px]">
                <Expander />
                <span className="mr-[3px] w-2.5 border-t border-dotted border-[#999]" />
                {name}
              </li>
            ))}
          </ul>
        </li>
      </ul>
      <div className="flex w-[15px] flex-col items-center bg-[#f0f0f0]">
        <button aria-label="Scroll up" className="flex h-[17px] items-center">
          <svg width="9" height="6" viewBox="0 0 9 6" aria-hidden="true">
            <path d="M1 5L4.500 1.500L8 5" fill="none" stroke="#555" strokeWidth="1.600" />
          </svg>
        </button>
        <div className="h-[116px] w-full bg-[#cdcdcd]" />
      </div>
    </div>
  </section>
);

const Wall = () => (
  <svg width="150" height="212" viewBox="0 0 150 212" fill="none" className="absolute left-[175px] top-[254px]" role="img" aria-label="Selected wall">
    <path d="M7.500 8L19.500 1.500L140.500 20.500V203L128.500 209.500L7.500 190.500Z" fill="#819ddf" stroke="#9fb5e8" />
    <path d="M19.500 2V184L140 203M19.500 184L8 190" stroke="#6f8bd6" />
    <path d="M8 8.500L128.500 27V209M128.500 27L140 20.500" stroke="#b0c1ec" />
    <g fill="#3566cc" stroke="#1a2440" strokeLinejoin="round">
      <path d="M74 .8L78 11.500H70Z" />
      <path d="M74 210.500L78 199H70Z" />
      <path d="M.8 94.500L13 91.500L12 99.500Z" />
      <path d="M149 117L137.500 111.500L136.500 119.500Z" />
      <path d="M93 95.500L79.500 98L83 105Z" />
      <path d="M55.500 115.500L65 106.500L68.500 113Z" />
    </g>
  </svg>
);

const App: React.FC = () => (
  <div className="flex h-screen flex-col overflow-hidden bg-[#eeeeee] font-['Lato','Noto_Sans',sans-serif] text-xs text-black">
    <Gradients />
    <Ribbon />
    <div className="flex min-h-0 flex-1">
      <aside className="flex w-[300px] shrink-0 flex-col border-r-2 border-[#c8c8c8]">
        <PropertiesPalette />
        <ProjectBrowser />
      </aside>
      <main className="flex min-w-0 flex-1 flex-col bg-white">
        <div className="flex h-5 bg-[#cbcbcb]">
          <div className="flex w-32 items-center bg-white pl-1 pr-[5px]">
            <HouseIcon />
            <span className="ml-[7px] font-bold text-[#3c3c3c]">{'{3D}'}</span>
            <button aria-label="Close view" className="ml-auto"><CloseIcon /></button>
          </div>
        </div>
        <div className="relative flex-1">
          <Wall />
        </div>
      </main>
    </div>
  </div>
);

export default App;
